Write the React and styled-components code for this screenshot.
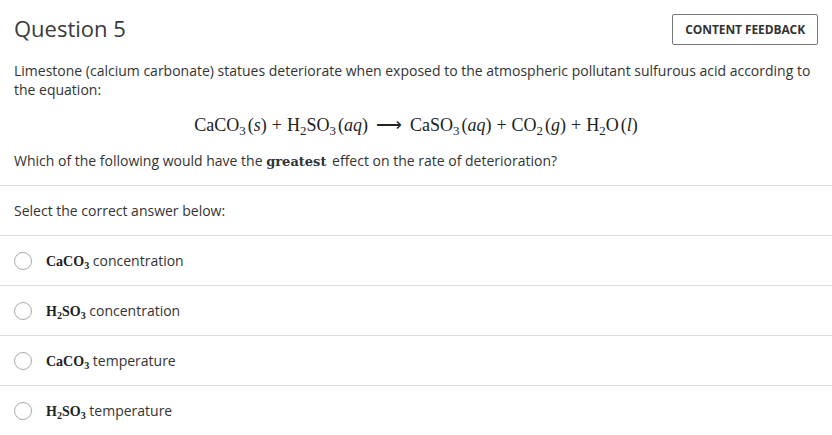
import React from 'react';
import styled, { createGlobalStyle } from 'styled-components';

const GlobalStyle = createGlobalStyle`
  body {
    margin: 0;
    background: #fff;
    font-family: "Open Sans", "Liberation Sans", sans-serif;
    color: #333;
  }
`;

const Page = styled.div`
  width: 832px;
`;

const Header = styled.div`
  display: flex;
  justify-content: space-between;
  align-items: center;
  padding: 14px 14px 0 14px;
`;

const Title = styled.h2`
  margin: 0;
  font-size: 22px;
  line-height: 28px;
  font-weight: 400;
  color: #3a3a3a;
  position: relative;
  top: -2px;
`;

const FeedbackButton = styled.button`
  height: 31px;
  padding: 0 12px;
  background: #fff;
  border: 1px solid #777;
  border-radius: 2px;
  font-family: "Open Sans", sans-serif;
  font-size: 12px;
  font-weight: 700;
  color: #333;
  letter-spacing: -0.1px;
`;

const Stem = styled.div`
  padding: 16px 14px 0 14px;
  font-size: 14px;
  line-height: 19px;
`;

const Paragraph = styled.p`
  margin: 0;
`;

const Equation = styled.div`
  text-align: center;
  font-family: "Liberation Serif", "Times New Roman", serif;
  font-size: 18px;
  padding: 16px 0 16px;
  line-height: 20px;
  color: #222;
`;

const Math = styled.span`
  font-family: "Liberation Serif", serif;
  font-weight: ${(p) => (p.$bold ? 700 : 400)};
  font-size: ${(p) => (p.$small ? '14px' : 'inherit')};
  color: #222;
`;

const Sub = styled.sub`
  font-size: 0.72em;
  vertical-align: -0.3em;
  line-height: 0;
`;

const Paren = styled.span`
  margin-left: 2px;
`;

const Op = styled.span`
  margin: 0 ${(p) => (p.$wide ? '8px' : '5px')};
`;

const Strong = styled.b`
  font-family: "DejaVu Serif", serif;
  font-weight: 700;
  font-size: 13px;
  margin-right: 2px;
`;

const Section = styled.div`
  border-top: 1px solid #ddd;
  padding: 0 14px;
  height: 49px;
  display: flex;
  align-items: center;
  font-size: 14px;
`;

const Option = styled(Section)`
  gap: 14px;
`;

const Radio = styled.span`
  width: 16px;
  height: 16px;
  border: 1px solid #aaa;
  border-radius: 50%;
  flex: none;
`;

const Chem = ({ f, bold, small }) => {
  const parts = f.split(/(\d)/);
  return (
    <Math $bold={bold} $small={small}>
      {parts.map((p, i) => (/\d/.test(p) ? <Sub key={i}>{p}</Sub> : p))}
    </Math>
  );
};

const State = ({ s }) => (
  <Paren>
    (<i>{s}</i>)
  </Paren>
);

const options = [
  ['CaCO3', 'concentration'],
  ['H2SO3', 'concentration'],
  ['CaCO3', 'temperature'],
  ['H2SO3', 'temperature'],
];

export default function App() {
  return (
    <Page>
      <GlobalStyle />
      <Header>
        <Title>Question 5</Title>
        <FeedbackButton>CONTENT FEEDBACK</FeedbackButton>
      </Header>
      <Stem>
        <Paragraph>
          Limestone (calcium carbonate) statues deteriorate when exposed to the atmospheric pollutant sulfurous acid according to
          the equation:
        </Paragraph>
        <Equation>
          <Chem f="CaCO3" />
          <State s="s" />
          <Op>+</Op>
          <Chem f="H2SO3" />
          <State s="aq" />
          <Op $wide>⟶</Op>
          <Chem f="CaSO3" />
          <State s="aq" />
          <Op>+</Op>
          <Chem f="CO2" />
          <State s="g" />
          <Op>+</Op>
          <Chem f="H2O" />
          <State s="l" />
        </Equation>
        <Paragraph>
          Which of the following would have the <Strong>greatest</Strong> effect on the rate of deterioration?
        </Paragraph>
      </Stem>
      <div style={{ height: 14 }} />
      <Section>Select the correct answer below:</Section>
      {options.map(([f, t], i) => (
        <Option key={i}>
          <Radio />
          <span>
            <Chem f={f} bold small /> {t}
          </span>
        </Option>
      ))}
    </Page>
  );
}
